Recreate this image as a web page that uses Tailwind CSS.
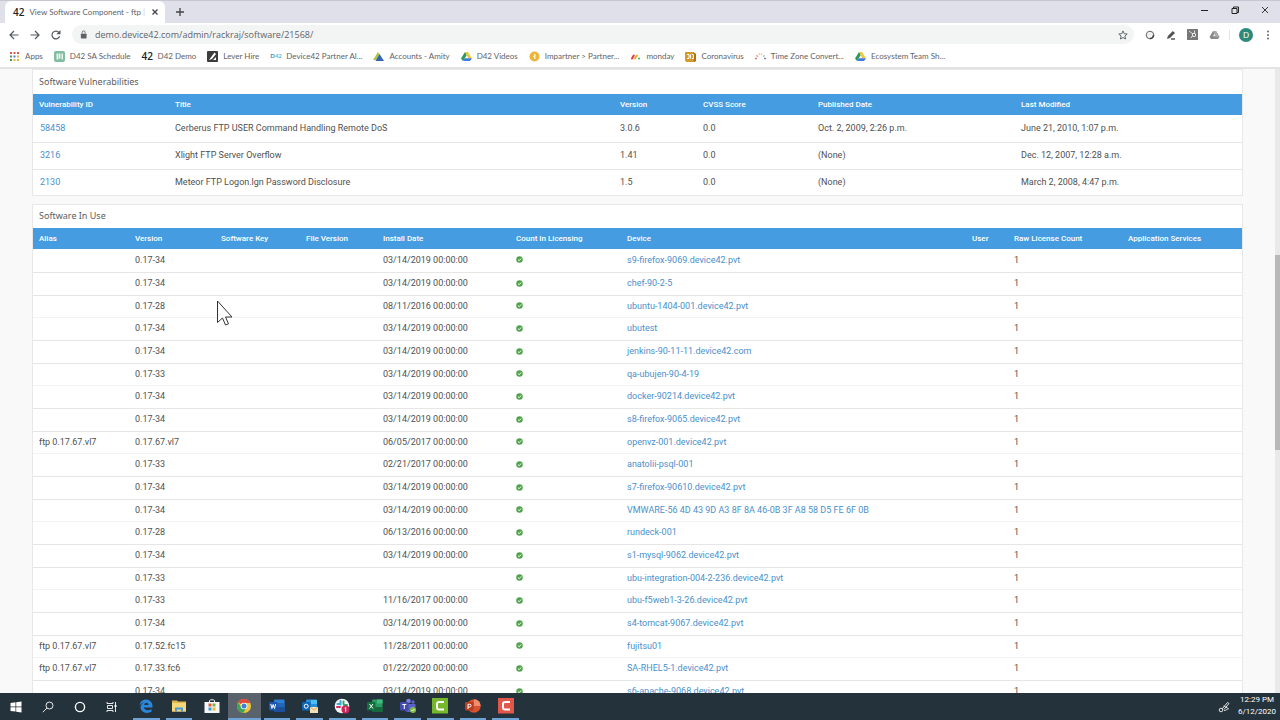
<!DOCTYPE html>
<html lang="en">
  <head>
    <meta charset="UTF-8" />
    <meta name="viewport" content="width=device-width, initial-scale=1.0" />
    <title>View Software Component - ftp | Device42</title>
    <script src="https://cdn.jsdelivr.net/npm/@tailwindcss/browser@4"></script>
  </head>
  <body class="relative h-screen flex flex-col overflow-hidden bg-[#f9f9f9] font-[Roboto,sans-serif] text-[9px] leading-3 text-[#505050]">
    <!-- Browser chrome -->
    <header class="shrink-0 bg-white font-[Lato,sans-serif] text-[#5f6368]">
      <!-- Tab strip -->
      <div class="h-[23px] flex items-end bg-[#dfe0e9] border-t border-[#c6c7d1] pl-[5px]">
        <div class="h-[22px] w-40 flex items-center gap-[5px] rounded-t-md bg-white pl-2 pr-1.5">
          <span class="font-['Open_Sans',sans-serif] text-[10px] font-semibold text-[#222]">42</span>
          <span class="flex-1 whitespace-nowrap text-[8px]">View Software Component - ftp <span class="text-[#c8c8c8]">|</span></span>
          <button aria-label="Close tab" class="w-2 h-2">
            <svg viewBox="0 0 8 8" class="w-2 h-2" fill="none" stroke="#444" stroke-width="1.3"><path d="M1.5 1.5l5 5M6.500 1.500l-5 5" /></svg>
          </button>
        </div>
        <button aria-label="New tab" class="ml-2.5 mb-1.5 w-2.5 h-2.5">
          <svg viewBox="0 0 10 10" class="w-2.5 h-2.5" fill="none" stroke="#444" stroke-width="1.3"><path d="M5 1v8M1 5h8" /></svg>
        </button>
        <div class="ml-auto h-[22px] flex items-center gap-5 pr-2.5 pb-1">
          <button aria-label="Minimize"><svg viewBox="0 0 10 10" class="w-2.5 h-2.5" stroke="#222"><path d="M1 5.500h7" /></svg></button>
          <button aria-label="Restore"><svg viewBox="0 0 10 10" class="w-2.5 h-2.5" fill="none" stroke="#222"><path d="M2 3.500h5v5H2zM3.500 3.500v-1.500h5v5.500h-1.500" /></svg></button>
          <button aria-label="Close"><svg viewBox="0 0 10 10" class="w-2.5 h-2.5" stroke="#222" stroke-width=".9"><path d="M2 2l6 6M8 2l-6 6" /></svg></button>
        </div>
      </div>

      <!-- Toolbar -->
      <div class="h-[23px] flex items-center pl-[9px] pr-2">
        <button aria-label="Back" class="mr-[11px]"><svg viewBox="0 0 10 10" class="w-2.5 h-2.5" fill="none" stroke="#555a5e" stroke-width="1.2"><path d="M9.500 5H1M5 1L1 5l4 4" /></svg></button>
        <button aria-label="Forward" class="mr-[11px]"><svg viewBox="0 0 10 10" class="w-2.5 h-2.5" fill="none" stroke="#555a5e" stroke-width="1.2"><path d="M.5 5H9M5 1l4 4-4 4" /></svg></button>
        <button aria-label="Reload" class="mr-[11px]"><svg viewBox="0 0 10 10" class="w-2.5 h-2.5" fill="none" stroke="#555a5e" stroke-width="1.2"><path d="M8.600 6.300a3.900 3.900 0 1 1-.6-3.700" /><path d="M9.500 0v4.200H5.300z" fill="#555a5e" stroke="none" /></svg></button>
        <div class="flex-1 h-[19px] flex items-center gap-2 rounded-full bg-[#f3f5f5] pl-2 pr-1.5">
          <svg viewBox="0 0 8 10" class="w-[7px] h-[9px]"><rect x="1" y="4" width="6.500" height="5.500" rx=".7" fill="#5f6368" /><path d="M2.500 4V2.600a1.700 1.700 0 0 1 3.400 0V4" fill="none" stroke="#5f6368" /></svg>
          <input type="text" aria-label="Address" value="demo.device42.com/admin/rackraj/software/21568/" class="flex-1 bg-transparent outline-none font-['Open_Sans',sans-serif] text-[9px] text-[#5f6368]" />
          <button aria-label="Bookmark this page"><svg viewBox="0 0 10 10" class="w-2.5 h-2.5" fill="none" stroke="#555a5e" stroke-width=".9"><path d="M5 .9l1.200 2.800 3 .3-2.300 2 .7 3L5 7.500 2.400 9l.7-3-2.300-2 3-.3z" /></svg></button>
        </div>
        <div class="flex items-center gap-[11px] pl-[11px]">
          <svg viewBox="0 0 10 10" class="w-2.5 h-2.5" fill="none"><circle cx="5" cy="5" r="3.600" stroke="#777" stroke-width="1.300" /><path d="M5 8.600A3.600 3.600 0 0 0 8.600 5" stroke="#444" stroke-width="1.500" /><circle cx="4.400" cy="4.400" r="2.200" fill="#eee" /></svg>
          <svg viewBox="0 0 10 10" class="w-2.5 h-2.5"><path d="M1 9l.8-3 5-5L9 3 4 8z" fill="#555" /><path d="M5 9h4" stroke="#555" stroke-width="1.500" /></svg>
          <svg viewBox="0 0 11 11" class="w-[11px] h-[11px]"><rect width="11" height="11" rx=".5" fill="#777" /><path d="M2 2l4 3M4 9l2-3M7.500 1.500v3" stroke="#ddd" fill="none" /><circle cx="7" cy="6" r="1.700" stroke="#eee" fill="none" /></svg>
          <svg viewBox="0 0 11 10" class="w-[11px] h-2.5"><path d="M4 1h3l3.500 6L9 9H2L.5 7z" fill="#8b8b8b" /><path d="M5.500 3.500L7 6.300H4z" fill="#eee" /><path d="M7 1l3.500 6H7.200L4 1z" fill="#aaa" /></svg>
          <span class="w-px h-2.5 bg-[#e4e4e4] -ml-0.5"></span>
          <button class="-ml-0.5 w-3.5 h-3.5 rounded-full bg-[#2c8a7c] text-white text-[8px] leading-[14px] text-center">D</button>
          <button aria-label="Menu" class="w-2"><svg viewBox="0 0 8 10" class="w-2 h-2.5" fill="#555a5e"><circle cx="4" cy="1.500" r=".9" /><circle cx="4" cy="5" r=".9" /><circle cx="4" cy="8.500" r=".9" /></svg></button>
        </div>
      </div>

      <!-- Bookmarks -->
      <nav class="h-[23px] flex items-center gap-[11px] pl-[9px] pb-px border-b-2 border-[#e3e3e3] text-[8px] whitespace-nowrap [&>a]:flex [&>a]:items-center [&>a]:gap-[5px] [&_svg]:w-[11px] [&_svg]:h-[11px]">
        <a href="#"><svg viewBox="0 0 11 11"><path d="M1 1h2v2H1zM4.500 1h2v2h-2zM8 1h2v2H8z" fill="#e0564a" /><path d="M1 4.500h2v2H1zM1 8h2v2H1z" fill="#4a9c58" /><path d="M4.500 4.500h2v2h-2z" fill="#4a7fd8" /><path d="M8 4.500h2v2H8zM4.500 8h2v2h-2zM8 8h2v2H8z" fill="#e8b33c" /></svg>Apps</a>
        <a href="#"><svg viewBox="0 0 11 11"><rect width="11" height="11" rx="2" fill="#80bda0" /><path d="M2.500 2.500h2v6h-2zM5 2.500h1.500v5H5zM7.500 2.500H9v6H7.500z" fill="#e9f5ee" /></svg>D42 SA Schedule</a>
        <a href="#"><span class="w-[11px] font-['Open_Sans',sans-serif] text-[10px] font-semibold text-[#222]">42</span>D42 Demo</a>
        <a href="#"><svg viewBox="0 0 11 11"><rect width="11" height="11" rx="1" fill="#3d3d3d" /><path d="M2 9l5.500-7.500L9 3 5 8zM6 9l3-3v3z" fill="#fff" /></svg>Lever Hire</a>
        <a href="#"><span class="w-[11px] text-[6px] font-bold text-[#3e8cb4]">D<span class="text-[#52c3df]">42</span></span>Device42 Partner Al...</a>
        <a href="#"><svg viewBox="0 0 11 11"><path d="M5 1L0 9h3l3.500-5.500z" fill="#a9c83a" /><path d="M6.500 3L11 10H2.500z" fill="#3563b5" /></svg>Accounts - Amity</a>
        <a href="#"><svg viewBox="0 0 11 11"><path d="M4 1L0 7.500 2 10l3.800-6z" fill="#2f9a57" /><path d="M4 1h3l4 6.500H7.500z" fill="#f3c63b" /><path d="M3.700 7.200H11L9 10H2z" fill="#3f7de0" /></svg>D42 Videos</a>
        <a href="#"><svg viewBox="0 0 11 11"><circle cx="5.500" cy="5.500" r="5" fill="#edb63a" /><path d="M5 3h1.500v5H5zM4 5h1v1H4z" fill="#fff3cf" /></svg>Impartner &gt; Partner...</a>
        <a href="#"><svg viewBox="0 0 11 11" stroke-width="2" stroke-linecap="round"><path d="M2 7.500l1.800-3" stroke="#e2374a" /><path d="M5 7.500l1.800-3" stroke="#ecae23" /><path d="M9 7.500v0" stroke="#30b564" /></svg>monday</a>
        <a href="#"><svg viewBox="0 0 11 11"><path d="M0 1h8l3 2v7l-2 1H1L0 9z" fill="#d49b2c" /><path d="M8 1l3 2v7l-2 1z" fill="#ae7215" /><path d="M2 3.500h2v4H2M5.500 3.500v4M7 3.500h1.500v4H7" fill="none" stroke="#fff" /></svg>Coronavirus</a>
        <a href="#"><svg viewBox="0 0 11 11" fill="none" stroke-width="1.300"><path d="M0 7.500h2M1.500 4.500l1.500 1" stroke="#dc7777" /><path d="M4 2.500l.7 1.200M6.800 2.500l-.7 1.200" stroke="#e3b64c" /><path d="M9.500 4.500L8 5.500" stroke="#80bd76" /><path d="M9 7.500h2" stroke="#9a78c7" /></svg>Time Zone Convert...</a>
        <a href="#"><svg viewBox="0 0 11 11"><path d="M4 1L0 7.500 2 10l3.800-6z" fill="#2f9a57" /><path d="M4 1h3l4 6.500H7.500z" fill="#f3c63b" /><path d="M3.700 7.200H11L9 10H2z" fill="#3f7de0" /></svg>Ecosystem Team Sh...</a>
      </nav>
    </header>

    <!-- Page -->
    <div class="flex-1 min-h-0 flex">
      <main class="flex-1 min-w-0 overflow-hidden pl-8 pr-8">
        <section class="bg-white border border-[#e8e8e8]">
          <h2 class="h-6 flex items-center px-1.5 font-['Noto_Sans',sans-serif] text-[#5c5c5c]">Software Vulnerabilities</h2>
          <table class="w-full table-fixed text-left">
            <colgroup>
              <col class="w-[136px]" />
              <col />
              <col class="w-[83px]" />
              <col class="w-[115px]" />
              <col class="w-[203px]" />
              <col class="w-[227px]" />
            </colgroup>
            <thead class="bg-[#459ce1] text-[8px] text-white">
              <tr class="h-[21px] [&>th]:px-1.5 [&>th]:font-medium">
                <th>Vulnerability ID</th><th>Title</th><th>Version</th><th>CVSS Score</th><th>Published Date</th><th>Last Modified</th>
              </tr>
            </thead>
            <tbody id="vulnRows" class="[&>tr]:h-[27px] [&>tr]:border-b [&>tr]:border-[#e6e6e6] [&>tr:last-child]:h-[26px] [&>tr:last-child]:border-0 [&_td]:px-1.5 [&_td]:pb-px [&_a]:pl-px [&_a]:text-[#4a90cb]"></tbody>
          </table>
        </section>

        <section class="mt-2 bg-white border border-[#e8e8e8]">
          <h2 class="h-[23px] flex items-center px-1.5 pb-px font-['Noto_Sans',sans-serif] text-[#5c5c5c]">Software In Use</h2>
          <table class="w-full table-fixed text-left whitespace-nowrap">
            <colgroup>
              <col class="w-24" />
              <col class="w-[86px]" />
              <col class="w-[85px]" />
              <col class="w-[77px]" />
              <col class="w-[133px]" />
              <col class="w-[111px]" />
              <col />
              <col class="w-[42px]" />
              <col class="w-[114px]" />
              <col class="w-[120px]" />
            </colgroup>
            <thead class="bg-[#459ce1] text-[8px] text-white">
              <tr class="h-[21px] [&>th]:px-1.5 [&>th]:font-medium">
                <th>Alias</th><th>Version</th><th>Software Key</th><th>File Version</th><th>Install Date</th><th>Count In Licensing</th><th>Device</th><th>User</th><th>Raw License Count</th><th>Application Services</th>
              </tr>
            </thead>
            <tbody id="useRows" class="[&>tr]:h-[23px] [&>tr]:border-b [&>tr]:border-[#e6e6e6] [&>tr:nth-child(3n)]:h-[22px] [&>tr:nth-child(3n)]:border-[#f3f3f3] [&_td]:px-1.5 [&_td]:pb-px [&_a]:text-[#4a90cb]"></tbody>
          </table>
        </section>
      </main>
      <!-- Scrollbar -->
      <div class="w-[5px] bg-[#e9e9e9] pt-[186px]">
        <div class="h-[195px] bg-[#b8b8b8]"></div>
      </div>
    </div>

    <!-- Taskbar -->
    <footer class="relative shrink-0 h-[27px] flex bg-[#24323b] font-[Roboto,sans-serif] text-white">
      <div class="flex [&>button]:w-8 [&>button]:flex [&>button]:items-center [&>button]:justify-center [&_svg]:w-3 [&_svg]:h-3">
        <button aria-label="Start"><svg viewBox="0 0 12 12" fill="#fff"><path d="M.5 2l5-.7v4.300h-5zM6.200 1.200L11.500.500v5.100H6.200zM.5 6.300h5v4.300l-5-.7zM6.200 6.300h5.300v5.200l-5.300-.8z" /></svg></button>
        <button aria-label="Search"><svg viewBox="0 0 12 12" fill="none" stroke="#e8e8e8"><circle cx="7.500" cy="4.500" r="3.500" /><path d="M5 7L.8 11.200" /></svg></button>
        <button aria-label="Cortana"><svg viewBox="0 0 12 12" fill="none" stroke="#fff" stroke-width="1.400"><circle cx="6" cy="6" r="4.600" /></svg></button>
        <button aria-label="Task view"><svg viewBox="0 0 12 12" fill="none" stroke="#e8e8e8"><path d="M1 1v1.500h6V1M1.500 4.500h5v3h-5zM1 11V9.500h6V11M9.500 1v10" /><path d="M8.500 4h2v2h-2z" fill="#fff" stroke="none" /></svg></button>
      </div>
      <div class="ml-0.5 w-[392px] grid grid-cols-12 [&>button]:flex [&>button]:items-center [&>button]:justify-center [&>button]:mx-[3px] [&>button]:border-b-2 [&>button]:border-[#6ea3d8] [&_svg]:w-4 [&_svg]:h-4">
        <button aria-label="Edge"><svg viewBox="0 0 16 16"><path d="M1.500 7.500C2 3.500 5 1.500 8 1.500c4 0 6.500 3 6.500 6.500v1.500H6c.2 3 4.500 3.500 7.500 1.800v2.500c-5 2.500-11 .5-11-4.500 0-2.300 1.500-4 3.500-5-2 .6-3.500 1.500-4.500 3.200zM6.200 7h4.300c0-3.200-4-3-4.300 0z" fill="#2b86dc" /></svg></button>
        <button aria-label="File Explorer"><svg viewBox="0 0 16 16"><path d="M1 2.500h5l1 1h8v10H1z" fill="#e4b74c" /><path d="M1 5h14v8.500H1z" fill="#f6d779" /><path d="M4 9.500h8v4h-2v-2H6v2H4z" fill="#4b9cd6" /></svg></button>
        <button aria-label="Store" class="!border-transparent"><svg viewBox="0 0 16 16"><path d="M5.500 4V2.500c0-1 5-1 5 0V4" fill="none" stroke="#f4f4f4" /><path d="M.5 4h15v11h-15z" fill="#f7f7f7" /><path d="M4.500 5.500h3v3h-3z" fill="#e35a39" /><path d="M8.500 5.500h3v3h-3z" fill="#7cb342" /><path d="M4.500 9.500h3v3h-3z" fill="#2fa0df" /><path d="M8.500 9.500h3v3h-3z" fill="#f2b932" /></svg></button>
        <button aria-label="Chrome" class="!mx-0 bg-[#5a636b]"><svg viewBox="0 0 16 16"><circle cx="8" cy="8" r="7" fill="#f2c63b" /><path d="M8 8L2 4.300A7 7 0 0 1 14.400 5H8z" fill="#df4b3f" /><path d="M2 4.300A7 7 0 0 0 7.300 15L10.500 9.500 5.300 9.300z" fill="#3fa35a" /><circle cx="8" cy="8" r="3.300" fill="#fff" /><circle cx="8" cy="8" r="2.500" fill="#3f7fdc" /></svg></button>
        <button aria-label="Word"><svg viewBox="0 0 16 16"><rect x="5" y="1.500" width="10.500" height="12.500" rx="1" fill="#2f7fd6" /><path d="M5 5h10.500v4H5z" fill="#2366b8" /><path d="M5 9h10.500v5H5z" fill="#1b4f9c" /><rect x="0" y="4" width="8.500" height="8.500" rx="1" fill="#1a56ad" /><path d="M1.800 6l1.100 4.500 1.300-4 1.300 4L6.700 6" stroke="#fff" fill="none" /></svg></button>
        <button aria-label="Outlook"><svg viewBox="0 0 16 16"><rect x="4" y="1.500" width="11" height="10" rx="1" fill="#2591dc" /><path d="M9 2h6v4H9z" fill="#4fbdf0" /><rect x="0" y="4" width="8.500" height="8.500" rx="1" fill="#0f65b5" /><circle cx="4.200" cy="8.200" r="2" stroke="#fff" fill="none" /><path d="M8 9h8v6H8z" fill="#f6dfb4" /><path d="M8 9l4 3 4-3" stroke="#c29a58" fill="none" stroke-width=".7" /></svg></button>
        <button aria-label="Slack"><svg viewBox="0 0 16 16"><circle cx="8" cy="8" r="7.300" fill="#f4f4f4" /><g stroke-width="2" stroke-linecap="round"><path d="M6.500 3v3.500" stroke="#36a9d4" /><path d="M3 9h3" stroke="#d92b62" /><path d="M9.500 3.500V6" stroke="#35a374" /><path d="M3.500 6h2" stroke="#36a9d4" /><path d="M10 7h3" stroke="#35a374" /></g><circle cx="11.500" cy="11.500" r="4" fill="#c92658" /><path d="M10.700 10l1-.6v4.200" fill="none" stroke="#fff" /></svg></button>
        <button aria-label="Excel"><svg viewBox="0 0 16 16"><rect x="5" y="1.500" width="10.500" height="12.500" rx="1" fill="#2b9b62" /><path d="M10 1.500h5.500v4H10z" fill="#3fbd7c" /><path d="M5 9h10.500v5H5z" fill="#17683c" /><rect x="0" y="4" width="8.500" height="8.500" rx="1" fill="#13713e" /><path d="M2.500 6l3.500 4.500M6 6l-3.500 4.500" stroke="#fff" /></svg></button>
        <button aria-label="Teams"><svg viewBox="0 0 16 16"><circle cx="8.500" cy="3" r="2.300" fill="#7b83eb" /><circle cx="13" cy="4" r="1.700" fill="#5b62c9" /><path d="M5 6h10.500v5c0 2-2 3-4 3H8c-2 0-3-1-3-3z" fill="#5b62c9" /><rect x="0" y="4" width="8.500" height="8.500" rx="1" fill="#444bae" /><path d="M2.300 6.500h4M4.300 6.500v4.500" stroke="#fff" /><circle cx="13" cy="12" r="3" fill="#84bd43" /><path d="M11.500 12l1 1 2-2" stroke="#fff" fill="none" /></svg></button>
        <button aria-label="Camtasia"><svg viewBox="0 0 16 16"><path d="M0 0h16v15.500H0z" fill="#76b82b" /><path d="M12 4H7a2 2 0 0 0-2 2v3.500a2 2 0 0 0 2 2h5" fill="none" stroke="#fff" stroke-width="2" /></svg></button>
        <button aria-label="PowerPoint"><svg viewBox="0 0 16 16"><circle cx="9" cy="8" r="6.700" fill="#d9532f" /><path d="M9 1.300A6.700 6.700 0 0 1 15.700 8H9z" fill="#f18d6d" /><rect x="0" y="4" width="8.500" height="8.500" rx="1" fill="#b83c1e" /><path d="M3 11V6.300h1.700a1.300 1.300 0 0 1 0 2.700H3" stroke="#fff" fill="none" /></svg></button>
        <button aria-label="Camtasia Recorder"><svg viewBox="0 0 16 16"><path d="M0 0h16v15.500H0z" fill="#e2574a" /><path d="M12 4H7a2 2 0 0 0-2 2v3.500a2 2 0 0 0 2 2h5" fill="none" stroke="#fff" stroke-width="2" /></svg></button>
      </div>
      <div class="ml-auto flex items-center gap-2 pr-1">
        <svg viewBox="0 0 12 12" class="w-3 h-3" fill="none" stroke="#e0e0e0"><circle cx="3" cy="9" r="1.800" /><path d="M4 8l5.500-6.500 1.500 1-5 6M5.500 5l5 2.500M6 9.500c2 0 3-1.500 4.500-1.500" /></svg>
        <div class="pb-px text-center text-[8px]">
          <div>12:29 PM</div>
          <div>6/12/2020</div>
        </div>
      </div>
    </footer>

    <!-- Mouse pointer -->
    <svg viewBox="0 0 17 26" class="absolute left-[216px] top-[300px] w-[17px] h-[26px] pointer-events-none"><path d="M1.500 1v21.500l5-4.500 3 7 3-1.200-3-6.800h6.500z" fill="#fff" stroke="#333" /></svg>

    <script>
      const vulnerabilities = [
        ['58458', 'Cerberus FTP USER Command Handling Remote DoS', '3.0.6', '0.0', 'Oct. 2, 2009, 2:26 p.m.', 'June 21, 2010, 1:07 p.m.'],
        ['3216', 'Xlight FTP Server Overflow', '1.41', '0.0', '(None)', 'Dec. 12, 2007, 12:28 a.m.'],
        ['2130', 'Meteor FTP Logon.lgn Password Disclosure', '1.5', '0.0', '(None)', 'March 2, 2008, 4:47 p.m.'],
      ];

      // alias, version, install date, device
      const software = [
        ['', '0.17-34', '03/14/2019', 's9-firefox-9069.device42.pvt'],
        ['', '0.17-34', '03/14/2019', 'chef-90-2-5'],
        ['', '0.17-28', '08/11/2016', 'ubuntu-1404-001.device42.pvt'],
        ['', '0.17-34', '03/14/2019', 'ubutest'],
        ['', '0.17-34', '03/14/2019', 'jenkins-90-11-11.device42.com'],
        ['', '0.17-33', '03/14/2019', 'qa-ubujen-90-4-19'],
        ['', '0.17-34', '03/14/2019', 'docker-90214.device42.pvt'],
        ['', '0.17-34', '03/14/2019', 's8-firefox-9065.device42.pvt'],
        ['ftp 0.17.67.vl7', '0.17.67.vl7', '06/05/2017', 'openvz-001.device42.pvt'],
        ['', '0.17-33', '02/21/2017', 'anatolii-psql-001'],
        ['', '0.17-34', '03/14/2019', 's7-firefox-90610.device42.pvt'],
        ['', '0.17-34', '03/14/2019', 'VMWARE-56 4D 43 9D A3 8F 8A 46-0B 3F A8 58 D5 FE 6F 0B'],
        ['', '0.17-28', '06/13/2016', 'rundeck-001'],
        ['', '0.17-34', '03/14/2019', 's1-mysql-9062.device42.pvt'],
        ['', '0.17-33', '', 'ubu-integration-004-2-236.device42.pvt'],
        ['', '0.17-33', '11/16/2017', 'ubu-f5web1-3-26.device42.pvt'],
        ['', '0.17-34', '03/14/2019', 's4-tomcat-9067.device42.pvt'],
        ['ftp 0.17.67.vl7', '0.17.52.fc15', '11/28/2011', 'fujitsu01'],
        ['ftp 0.17.67.vl7', '0.17.33.fc6', '01/22/2020', 'SA-RHEL5-1.device42.pvt'],
        ['', '0.17-34', '03/14/2019', 's6-apache-9068.device42.pvt'],
      ];

      const check = '<svg viewBox="0 0 8 8" class="w-[7px] h-[7px]"><circle cx="4" cy="4" r="3.700" fill="#4fa34b" /><path d="M2.200 4.100l1.400 1.300 2.300-2.600" fill="none" stroke="#fff" stroke-width="1.100" /></svg>';

      document.getElementById('vulnRows').innerHTML = vulnerabilities
        .map(([id, ...rest]) => `<tr><td><a href="#">${id}</a></td>${rest.map((v) => `<td>${v}</td>`).join('')}</tr>`)
        .join('');

      document.getElementById('useRows').innerHTML = software
        .map(
          ([alias, version, date, device]) => `
            <tr>
              <td>${alias}</td><td>${version}</td><td></td><td></td>
              <td>${date ? date + ' 00:00:00' : ''}</td>
              <td>${check}</td>
              <td><a href="#">${device}</a></td>
              <td></td><td>1</td><td></td>
            </tr>`
        )
        .join('');
    </script>
  </body>
</html>
